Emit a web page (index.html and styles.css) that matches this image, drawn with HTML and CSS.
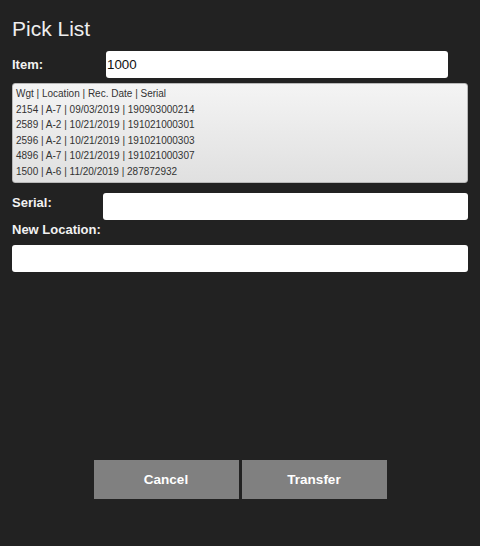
FILE: index.html
```html
<!DOCTYPE html>
<html>
<head>
<meta charset="utf-8">
<title>Pick List</title>
<link rel="stylesheet" href="styles.css">
</head>
<body>
<div class="page">
  <h1 class="title">Pick List</h1>
  <div class="item-row">
    <label class="label item-label">Item:</label>
    <input class="field" type="text" value="1000">
  </div>
  <div class="list">
    <div class="list-row">Wgt | Location | Rec. Date | Serial</div>
    <div class="list-row">2154 | A-7 | 09/03/2019 | 190903000214</div>
    <div class="list-row">2589 | A-2 | 10/21/2019 | 191021000301</div>
    <div class="list-row">2596 | A-2 | 10/21/2019 | 191021000303</div>
    <div class="list-row">4896 | A-7 | 10/21/2019 | 191021000307</div>
    <div class="list-row">1500 | A-6 | 11/20/2019 | 287872932</div>
  </div>
  <div class="serial-row">
    <label class="label serial-label">Serial:</label>
    <input class="field" type="text">
  </div>
  <label class="label newloc-label">New Location:</label>
  <input class="field field-full" type="text">
  <div class="actions">
    <button class="btn">Cancel</button>
    <button class="btn">Transfer</button>
  </div>
</div>
</body>
</html>
```
FILE: styles.css
```css
html, body {
  margin: 0;
  padding: 0;
  background: #222222;
  height: 100%;
}
body {
  font-family: "Liberation Sans", Arial, sans-serif;
}
.page {
  padding: 17px 12px 0 12px;
}
.title {
  margin: 0 0 10px 0;
  font-size: 21px;
  line-height: 24px;
  font-weight: normal;
  color: #eeeeee;
}
.label {
  display: block;
  font-size: 13px;
  line-height: 15px;
  font-weight: bold;
  color: #f2f2f2;
}
.field {
  box-sizing: border-box;
  height: 27px;
  border: 0;
  border-radius: 3px;
  background: #ffffff;
  padding: 0 1px;
  margin: 0;
  font-family: "Liberation Sans", Arial, sans-serif;
  font-size: 13.33px;
  color: #111111;
  outline: none;
}
.item-row {
  display: grid;
  grid-template-columns: 94px 342px;
  align-items: start;
}
.item-label {
  margin-top: 6px;
}
.item-row .field {
  width: 342px;
}
.list {
  box-sizing: border-box;
  margin-top: 5px;
  height: 100px;
  border: 1px solid #b8b8b8;
  border-radius: 3px;
  background: linear-gradient(#f4f4f4, #e0e0e0);
  padding: 2px 3px;
  font-size: 10px;
  line-height: 15.6px;
  color: #333333;
}
.serial-row {
  display: grid;
  grid-template-columns: 91px 365px;
  align-items: start;
  margin-top: 10px;
}
.serial-label {
  margin-top: 2px;
}
.serial-row .field {
  width: 365px;
}
.newloc-label {
  margin-top: 2px;
}
.field-full {
  display: block;
  width: 456px;
  margin-top: 8px;
}
.actions {
  display: flex;
  justify-content: center;
  gap: 3px;
  margin-top: 188px;
}
.btn {
  width: 145px;
  height: 39px;
  border: 0;
  background: #808080;
  color: #ffffff;
  font-family: "Liberation Sans", Arial, sans-serif;
  font-size: 13.5px;
  font-weight: bold;
  padding: 0;
}
```
